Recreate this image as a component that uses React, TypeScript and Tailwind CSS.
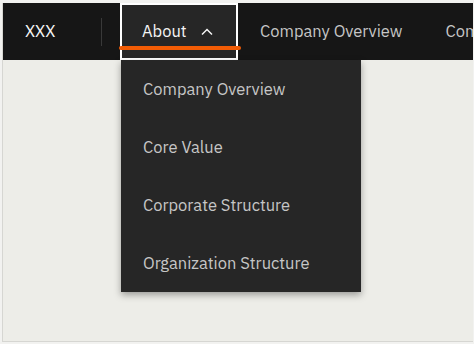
import React from "react";

export default function App() {
  const items = ["Company Overview", "Core Value", "Corporate Structure", "Organization Structure"];
  return (
    <div
      className="w-[474px] h-[344px] bg-[#f2f2f0] pt-[3px] pl-[2px] pr-[1px] pb-[2px] overflow-hidden"
      style={{ fontFamily: '"IBM Plex Sans", "Noto Sans", Roboto, sans-serif' }}
    >
      <div className="relative h-full border-l border-b border-[#d6d6d2] bg-[#edede8] flex flex-col">
        <nav className="h-[57px] bg-[#161616] flex items-stretch shrink-0 overflow-hidden">
          <div className="shrink-0 flex items-center pl-[22px] w-[98px] text-[16.5px] text-[#f4f4f4]">XXX</div>
          <div className="shrink-0 flex items-center">
            <div className="w-px h-[28px] bg-[#393939]" />
          </div>
          <div className="shrink-0 w-[18px]" />
          <div className="shrink-0 relative w-[118px] border-2 border-white bg-[#262626] flex items-center pl-[20px] text-[16.5px] text-[#f4f4f4]">
            <span>About</span>
            <svg className="ml-[14px]" width="12" height="8" viewBox="0 0 12 8" fill="none">
              <polyline points="1,6.5 6,1.5 11,6.5" stroke="#f4f4f4" strokeWidth="1.5" />
            </svg>
            <div className="absolute left-[-3px] right-[-5px] top-[41px] h-[4px] rounded-full bg-[#f25c05]" />
          </div>
          <div className="shrink-0 flex items-center pl-[22px] text-[16.5px] text-[#c6c6c6] whitespace-nowrap gap-[43px]">
            <span>Company Overview</span>
            <span>Company Value</span>
          </div>
        </nav>
        <div className="absolute left-[118px] top-[57px] w-[240px] bg-[#262626] shadow-[0_3px_7px_rgba(0,0,0,0.35)] flex flex-col">
          {items.map((t) => (
            <div key={t} className="h-[58px] flex items-center pl-[22px] text-[16.5px] text-[#c6c6c6] whitespace-nowrap">
              {t}
            </div>
          ))}
        </div>
      </div>
    </div>
  );
}
